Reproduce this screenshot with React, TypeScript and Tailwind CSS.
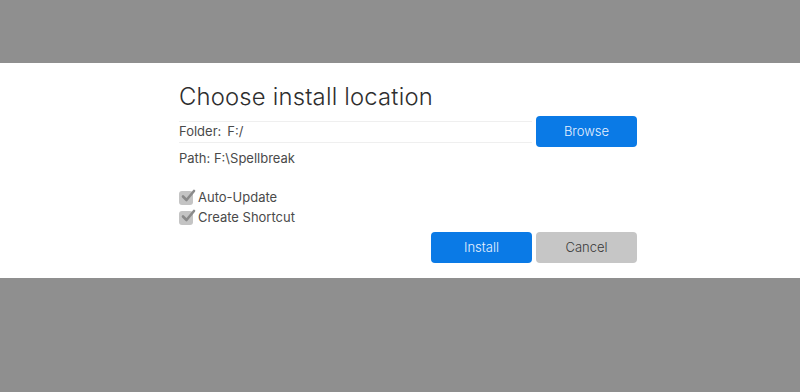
import React from 'react';

function Check() {
  return (
    <span className="relative inline-block w-[14px] h-[14px] mr-[5px]">
      <span className="absolute inset-0 rounded-[3px] bg-[#c4c4c4]" />
      <svg className="absolute -top-[3px] left-[1px]" width="16" height="16" viewBox="0 0 16 16">
        <path d="M3 8.5 L6.5 12 L14 3" fill="none" stroke="#8a8a8a" strokeWidth="2.6" strokeLinecap="round" strokeLinejoin="round" />
      </svg>
    </span>
  );
}

export default function App() {
  return (
    <div className="w-[800px] h-[392px] bg-[#8f8f8f] flex flex-col" style={{ fontFamily: 'Inter, "Noto Sans", sans-serif' }}>
      <div className="h-[63px]" />
      <div className="h-[215px] bg-white">
        <div className="ml-[179px] w-[458px] pt-[18px] text-[#4a4a4a]">
          <h1 className="text-[23.8px] font-light leading-[32px] text-[#2e2e2e] tracking-[0.2px]">Choose install location</h1>
          <div className="mt-[3px] flex items-center h-[31px]">
            <div className="flex-1 h-[22px] border-y border-[#efefef] flex items-center text-[13px]">
              <span className="mr-[6px]">Folder:</span>
              <span>F:/</span>
            </div>
            <button className="ml-[4px] w-[101px] h-[31px] rounded-[4px] bg-[#0a7ae6] text-[#e6f1ff] text-[13px] font-light">Browse</button>
          </div>
          <div className="mt-[1px] text-[13px] h-[20px] leading-[20px]">Path: F:\Spellbreak</div>
          <div className="mt-[20px] flex flex-col gap-[1px] text-[13px]">
            <label className="flex items-center h-[19px]"><Check />Auto-Update</label>
            <label className="flex items-center h-[19px]"><Check />Create Shortcut</label>
          </div>
          <div className="mt-[5px] flex justify-end gap-[4px]">
            <button className="w-[101px] h-[31px] rounded-[4px] bg-[#0a7ae6] text-[#e6f1ff] text-[13px] font-light">Install</button>
            <button className="w-[101px] h-[31px] rounded-[4px] bg-[#c6c6c6] text-[#3a3a3a] text-[13px] font-light">Cancel</button>
          </div>
        </div>
      </div>
    </div>
  );
}
